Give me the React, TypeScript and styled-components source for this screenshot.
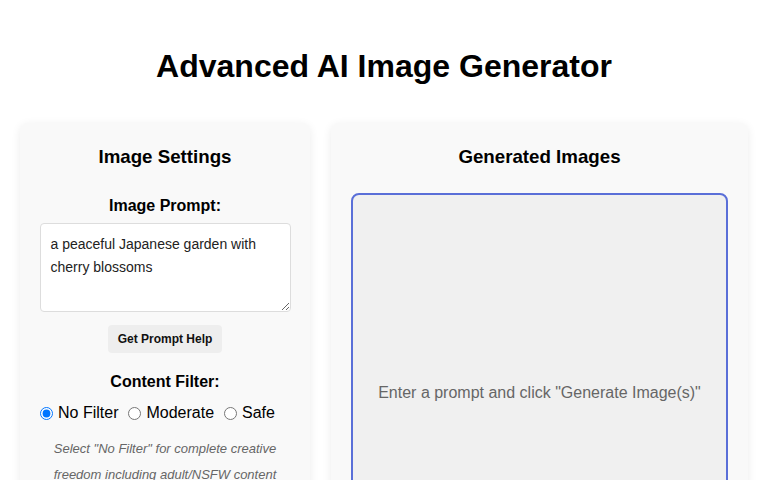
import * as React from 'react';
import styled, { createGlobalStyle } from 'styled-components';

const GlobalStyle = createGlobalStyle`
  body {
    margin: 0;
    font-family: "Liberation Sans", Arial, sans-serif;
    color: #000;
    background: #fff;
  }
`;

export default function App() {
  const [prompt, setPrompt] = React.useState('a peaceful Japanese garden with cherry blossoms');
  const [filter, setFilter] = React.useState('none');

  return (
    <Page>
      <GlobalStyle />
      <Title>Advanced AI Image Generator</Title>
      <Layout>
        <Card>
          <CardTitle>Image Settings</CardTitle>
          <Field>
            <Label htmlFor="prompt">Image Prompt:</Label>
            <PromptInput id="prompt" value={prompt} onChange={(e) => setPrompt(e.target.value)} />
            <HelpButton>Get Prompt Help</HelpButton>
          </Field>
          <Field>
            <Label as="div">Content Filter:</Label>
            <RadioRow>
              {[
                ['none', 'No Filter'],
                ['moderate', 'Moderate'],
                ['safe', 'Safe'],
              ].map(([value, text]) => (
                <RadioLabel key={value}>
                  <input
                    type="radio"
                    name="filter"
                    checked={filter === value}
                    onChange={() => setFilter(value)}
                  />
                  {text}
                </RadioLabel>
              ))}
            </RadioRow>
            <Note>Select "No Filter" for complete creative freedom including adult/NSFW content</Note>
          </Field>
        </Card>
        <Card>
          <CardTitle>Generated Images</CardTitle>
          <Preview>Enter a prompt and click "Generate Image(s)"</Preview>
        </Card>
      </Layout>
    </Page>
  );
}

const Page = styled.div`
  padding: 0 20px 20px;
`;

const Title = styled.h1`
  margin: 0;
  padding: 48px 0 38px;
  font-size: 32px;
  line-height: 37px;
  text-align: center;
`;

const Layout = styled.div`
  display: grid;
  grid-template-columns: 290px 1fr;
  gap: 21px;
  align-items: start;
`;

const Card = styled.div`
  background: #f9f9f9;
  border-radius: 8px;
  box-shadow: 0 2px 10px rgba(0, 0, 0, 0.08);
  padding: 20px;
`;

const CardTitle = styled.h3`
  margin: 3px 0 25px;
  font-size: 18.72px;
  line-height: 22px;
  text-align: center;
`;

const Field = styled.div`
  display: flex;
  flex-direction: column;
  align-items: center;
  padding-top: 4px;
  margin-bottom: 16px;
`;

const Label = styled.label`
  font-weight: bold;
  font-size: 16px;
  line-height: 18px;
  margin-bottom: 8px;
`;

const PromptInput = styled.textarea`
  box-sizing: border-box;
  width: 251px;
  height: 89px;
  padding: 9px 10px;
  border: 1px solid #ddd;
  border-radius: 4px;
  background: #fff;
  font-family: "Liberation Sans", Arial, sans-serif;
  font-size: 14px;
  line-height: 23px;
  color: #222;
  resize: vertical;
`;

const HelpButton = styled.button`
  margin-top: 13px;
  height: 28px;
  padding: 0 10px;
  border: none;
  border-radius: 4px;
  background: #eee;
  font-family: "Liberation Sans", Arial, sans-serif;
  font-weight: bold;
  font-size: 12px;
  color: #111;
  cursor: pointer;
`;

const RadioRow = styled.div`
  display: flex;
  align-self: flex-start;
  gap: 10px;
  margin-top: 4px;
`;

const RadioLabel = styled.label`
  display: flex;
  align-items: center;
  font-size: 16px;
  line-height: 20px;

  input {
    margin: 0 5px 0 0;
    width: 13px;
    height: 13px;
  }
`;

const Note = styled.p`
  margin: 13px 0 0;
  font-size: 13px;
  line-height: 26px;
  font-style: italic;
  color: #666;
  text-align: center;
  max-width: 230px;
`;

const Preview = styled.div`
  display: flex;
  align-items: center;
  justify-content: center;
  min-height: 396px;
  border: 2px solid #5a6fd8;
  border-radius: 8px;
  background: #f0f0f0;
  color: #666;
  font-size: 16px;
  text-align: center;
`;
